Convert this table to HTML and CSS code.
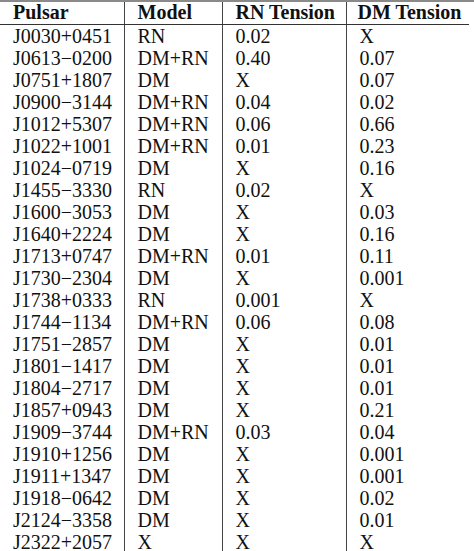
FILE: index.html
```html
<!DOCTYPE html>
<html>
<head>
<meta charset="utf-8">
<link rel="stylesheet" href="styles.css">
</head>
<body>
<div class="topline"></div>
<table class="tbl">
<thead>
<tr><th class="c1">Pulsar</th><th class="c2">Model</th><th class="c3">RN Tension</th><th class="c4">DM Tension</th></tr>
</thead>
<tbody>
<tr><td>J0030+0451</td><td>RN</td><td>0.02</td><td>X</td></tr>
<tr><td>J0613−0200</td><td>DM+RN</td><td>0.40</td><td>0.07</td></tr>
<tr><td>J0751+1807</td><td>DM</td><td>X</td><td>0.07</td></tr>
<tr><td>J0900−3144</td><td>DM+RN</td><td>0.04</td><td>0.02</td></tr>
<tr><td>J1012+5307</td><td>DM+RN</td><td>0.06</td><td>0.66</td></tr>
<tr><td>J1022+1001</td><td>DM+RN</td><td>0.01</td><td>0.23</td></tr>
<tr><td>J1024−0719</td><td>DM</td><td>X</td><td>0.16</td></tr>
<tr><td>J1455−3330</td><td>RN</td><td>0.02</td><td>X</td></tr>
<tr><td>J1600−3053</td><td>DM</td><td>X</td><td>0.03</td></tr>
<tr><td>J1640+2224</td><td>DM</td><td>X</td><td>0.16</td></tr>
<tr><td>J1713+0747</td><td>DM+RN</td><td>0.01</td><td>0.11</td></tr>
<tr><td>J1730−2304</td><td>DM</td><td>X</td><td>0.001</td></tr>
<tr><td>J1738+0333</td><td>RN</td><td>0.001</td><td>X</td></tr>
<tr><td>J1744−1134</td><td>DM+RN</td><td>0.06</td><td>0.08</td></tr>
<tr><td>J1751−2857</td><td>DM</td><td>X</td><td>0.01</td></tr>
<tr><td>J1801−1417</td><td>DM</td><td>X</td><td>0.01</td></tr>
<tr><td>J1804−2717</td><td>DM</td><td>X</td><td>0.01</td></tr>
<tr><td>J1857+0943</td><td>DM</td><td>X</td><td>0.21</td></tr>
<tr><td>J1909−3744</td><td>DM+RN</td><td>0.03</td><td>0.04</td></tr>
<tr><td>J1910+1256</td><td>DM</td><td>X</td><td>0.001</td></tr>
<tr><td>J1911+1347</td><td>DM</td><td>X</td><td>0.001</td></tr>
<tr><td>J1918−0642</td><td>DM</td><td>X</td><td>0.02</td></tr>
<tr><td>J2124−3358</td><td>DM</td><td>X</td><td>0.01</td></tr>
<tr><td>J2322+2057</td><td>X</td><td>X</td><td>X</td></tr>
</tbody>
</table>
</body>
</html>
```
FILE: styles.css
```css
html, body {
  margin: 0;
  padding: 0;
  background: #fff;
}
body {
  font-family: "Liberation Serif", "Times New Roman", serif;
  color: #111;
  width: 474px;
  overflow: hidden;
}
.topline {
  height: 2px;
  background: #8a8a8a;
  width: 474px;
}
.tbl {
  border-collapse: collapse;
  width: 469px;
  table-layout: fixed;
  font-size: 20px;
}
.tbl th, .tbl td {
  box-sizing: border-box;
  padding: 0 0 0 13px;
  text-align: left;
  white-space: nowrap;
  border-left: 1px solid #444;
}
.tbl th:first-child, .tbl td:first-child {
  border-left: none;
}
.tbl th {
  font-weight: bold;
  height: 22px;
  line-height: 21px;
  border-bottom: 1px solid #333;
  vertical-align: middle;
}
.tbl td {
  height: 22px;
  line-height: 22px;
  vertical-align: middle;
}
.c1 { width: 124px; }
.c2 { width: 98px; }
.c3 { width: 124px; }
.c4 { width: 123px; }
.tbl th.c4 { padding-left: 11px; }
```
